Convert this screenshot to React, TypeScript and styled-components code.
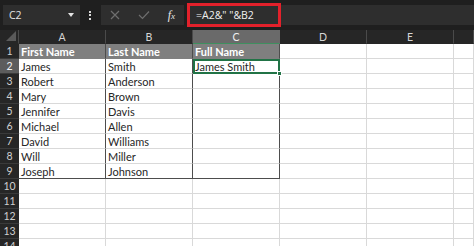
import React, { FC } from "react";
import styled, { createGlobalStyle } from "styled-components";

const GlobalStyle = createGlobalStyle`
  html, body {
    margin: 0;
    padding: 0;
    background: #1f1f1f;
    overflow: hidden;
  }
`;

const StyledPageDiv = styled.div`
  width: 474px;
  height: 246px;
  background: #1f1f1f;
  font-family: "Open Sans", "Noto Sans", sans-serif;
  overflow: hidden;
`;

const StyledToolbarDiv = styled.div`
  display: flex;
  align-items: center;
  height: 30px;
  padding: 0 0 0 3px;
  box-sizing: border-box;
`;

const StyledNameBoxDiv = styled.div`
  display: flex;
  align-items: center;
  justify-content: space-between;
  width: 77px;
  height: 20px;
  padding: 0 6px 0 6px;
  box-sizing: border-box;
  background: #2e2e2e;
  color: #e4e4e4;
  font-size: 10.5px;
`;

const StyledCaretSpan = styled.span`
  width: 0;
  height: 0;
  border-left: 3.5px solid transparent;
  border-right: 3.5px solid transparent;
  border-top: 4px solid #e4e4e4;
`;

const StyledDotsDiv = styled.div`
  display: flex;
  flex-direction: column;
  gap: 1.5px;
  margin: 0 10px 0 9px;
`;

const StyledDotSpan = styled.span`
  width: 2px;
  height: 2px;
  background: #d8d8d8;
`;

const StyledButtonGroupDiv = styled.div`
  display: flex;
  align-items: center;
  justify-content: space-around;
  width: 83px;
  height: 20px;
  background: #2e2e2e;
`;

const StyledFxSpan = styled.span`
  color: #e8e8e8;
  font-family: "Liberation Serif", serif;
  font-style: italic;
  font-size: 12px;

  & > small {
    font-size: 9px;
  }
`;

const StyledFormulaDiv = styled.div`
  flex: 1;
  display: flex;
  align-items: center;
  height: 20px;
  background: #2e2e2e;
  margin-left: 3px;
`;

const StyledHighlightDiv = styled.div`
  display: flex;
  align-items: center;
  width: 94px;
  height: 24px;
  box-sizing: border-box;
  border: 3px solid #e3212b;
  padding-left: 6px;
  color: #f0f0f0;
  font-size: 10.5px;
  white-space: pre;
`;

const StyledGridDiv = styled.div`
  display: grid;
  grid-template-columns: 19px repeat(5, 87px) 1fr;
  grid-template-rows: 14px;
  grid-auto-rows: 15px;
  font-family: Lato, "Open Sans", sans-serif;
`;

const StyledColHeadDiv = styled.div<{ active?: boolean }>`
  display: flex;
  align-items: center;
  justify-content: center;
  position: relative;
  box-sizing: border-box;
  background: ${({ active }) => (active ? "#6a6a6a" : "#262626")};
  border-right: 1px solid ${({ active }) => (active ? "#6a6a6a" : "#4a4a4a")};
  border-bottom: 1px solid ${({ active }) => (active ? "#3f8f5f" : "#262626")};
  color: ${({ active }) => (active ? "#f2f2f2" : "#d6d6d6")};
  font-size: 10.5px;
`;

const StyledCornerSvg = styled.svg`
  position: absolute;
  right: 2px;
  bottom: 2px;
`;

const StyledRowHeadDiv = styled.div<{ active?: boolean }>`
  display: flex;
  align-items: center;
  justify-content: center;
  box-sizing: border-box;
  background: ${({ active }) => (active ? "#5c5c5c" : "#262626")};
  border-bottom: 1px solid #3a3a3a;
  color: ${({ active }) => (active ? "#f2f2f2" : "#d0d0d0")};
  font-size: 10.5px;
`;

const StyledCellDiv = styled.div<{
  head?: boolean;
  edgeRight?: boolean;
  edgeBottom?: boolean;
  selected?: boolean;
}>`
  position: relative;
  display: flex;
  align-items: center;
  padding-left: 2px;
  box-sizing: border-box;
  white-space: nowrap;
  background: ${({ head }) => (head ? "#7f7f7f" : "#ffffff")};
  color: ${({ head }) => (head ? "#ffffff" : "#262626")};
  font-weight: ${({ head }) => (head ? 700 : 400)};
  font-size: 11px;
  border-right: 1px solid
    ${({ edgeRight }) => (edgeRight ? "#4d4d4d" : "#d9d9d9")};
  border-bottom: 1px solid
    ${({ edgeBottom, head }) =>
      edgeBottom ? "#4d4d4d" : head ? "#7f7f7f" : "#d9d9d9"};
  ${({ selected }) =>
    selected &&
    `
    outline: 2px solid #217346;
    outline-offset: -2px;
  `}
`;

const StyledHandleSpan = styled.span`
  position: absolute;
  right: -3px;
  bottom: -3px;
  width: 5px;
  height: 5px;
  background: #217346;
  border: 1px solid #ffffff;
  box-sizing: border-box;
  z-index: 2;
`;

const rows: [string, string, string][] = [
  ["First Name", "Last Name", "Full Name"],
  ["James", "Smith", "James Smith"],
  ["Robert", "Anderson", ""],
  ["Mary", "Brown", ""],
  ["Jennifer", "Davis", ""],
  ["Michael", "Allen", ""],
  ["David", "Williams", ""],
  ["Will", "Miller", ""],
  ["Joseph", "Johnson", ""],
];

const columns = ["A", "B", "C", "D", "E", ""];

const Toolbar: FC = () => (
  <StyledToolbarDiv>
    <StyledNameBoxDiv>
      C2
      <StyledCaretSpan />
    </StyledNameBoxDiv>
    <StyledDotsDiv>
      <StyledDotSpan />
      <StyledDotSpan />
      <StyledDotSpan />
    </StyledDotsDiv>
    <StyledButtonGroupDiv>
      <svg width="10" height="10" viewBox="0 0 10 10">
        <path d="M1 1 L9 9 M9 1 L1 9" stroke="#6e6e6e" strokeWidth="1.2" />
      </svg>
      <svg width="12" height="10" viewBox="0 0 12 10">
        <path d="M1 5 L4.5 8.5 L11 1.5" stroke="#6e6e6e" strokeWidth="1.2" fill="none" />
      </svg>
      <StyledFxSpan>
        f<small>x</small>
      </StyledFxSpan>
    </StyledButtonGroupDiv>
    <StyledFormulaDiv>
      <StyledHighlightDiv>{'=A2&" "&B2'}</StyledHighlightDiv>
    </StyledFormulaDiv>
  </StyledToolbarDiv>
);

export default function App() {
  const blankRows = [10, 11, 12, 13, 14];
  return (
    <StyledPageDiv>
      <GlobalStyle />
      <Toolbar />
      <StyledGridDiv>
        <StyledColHeadDiv>
          <StyledCornerSvg width="10" height="10" viewBox="0 0 10 10">
            <path d="M10 0 L10 10 L0 10 Z" fill="#5a5a5a" />
          </StyledCornerSvg>
        </StyledColHeadDiv>
        {columns.map((c, i) => (
          <StyledColHeadDiv key={"h" + i} active={c === "C"}>
            {c}
          </StyledColHeadDiv>
        ))}
        {rows.map((r, ri) => (
          <React.Fragment key={"r" + ri}>
            <StyledRowHeadDiv active={ri === 1}>{ri + 1}</StyledRowHeadDiv>
            {r.map((v, ci) => (
              <StyledCellDiv
                key={ci}
                head={ri === 0}
                edgeRight
                edgeBottom={ri === 8}
                selected={ri === 1 && ci === 2}
              >
                {v}
                {ri === 1 && ci === 2 && <StyledHandleSpan />}
              </StyledCellDiv>
            ))}
            <StyledCellDiv />
            <StyledCellDiv />
            <StyledCellDiv />
          </React.Fragment>
        ))}
        {blankRows.map((n) => (
          <React.Fragment key={"b" + n}>
            <StyledRowHeadDiv>{n}</StyledRowHeadDiv>
            {columns.map((_, ci) => (
              <StyledCellDiv key={ci} />
            ))}
          </React.Fragment>
        ))}
      </StyledGridDiv>
    </StyledPageDiv>
  );
}
